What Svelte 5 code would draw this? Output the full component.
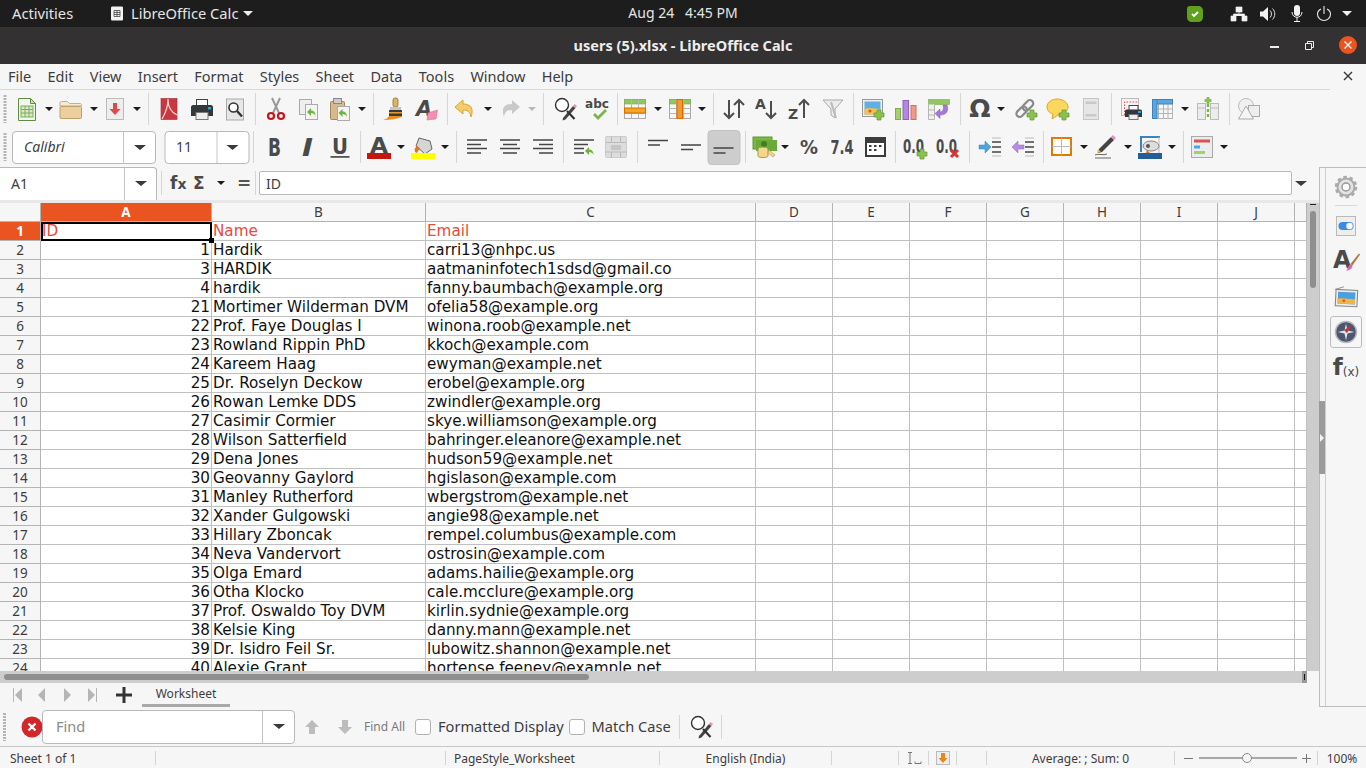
<script>
// green plus badge, used by several toolbar icons
const plus = (x, y) => `<path d="M${x - 2} ${y - 5}h4v3h3v4h-3v3h-4v-3h-3v-4h3z" fill="#8cc152" stroke="#5e9a2e" stroke-width=".7"/>`;
const back = (x, y, c = '#6cb33f') => `<path d="M${x} ${y}l4-4v2.5c3 0 4.5 2 4.5 5.5-1-2.200-2.500-3-4.500-3V${y + 4}z" fill="${c}"/>`;
const table = '<rect x="1.500" y="2.500" width="21" height="19" fill="#f6f6f6" stroke="#aaa"/><rect x="1.500" y="2.500" width="21" height="4.500" fill="#8fc85d" stroke="#7bb04c" stroke-width=".6"/><path d="M8.500 2.500v19M15.500 2.500v19M1.500 11.500h21M1.500 16.500h21" stroke="#b5b5b5" fill="none"/>';
const bold = 'font-family="DejaVu Sans" font-weight="bold" fill="#4a4a4a"';
const squeeze = (w) => `textLength="${w}" lengthAdjust="spacingAndGlyphs"`;
const lines = (list) => `<path d="${list}" stroke="#444" stroke-width="1.600" fill="none"/>`;
const bar = (c) => `<rect x="0" y="18" width="24" height="6" fill="${c}"/>`;

const icons = {
  new: '<path d="M3.500 1.500h12l5 5v17h-17z" fill="#f3f6ee" stroke="#5d8e43"/><path d="M15.500 1.500v5h5z" fill="#cfe0bd" stroke="#5d8e43"/><rect x="6" y="9" width="12" height="11" fill="#d9e8c6" stroke="#7fae5c"/><path d="M10 9v11M14 9v11M6 12.500h12M6 16h12" stroke="#7fae5c" fill="none"/>',
  folder: '<path d="M1 6c0-1 .5-1.500 1.500-1.500h6l2 2H21c1 0 1.500.5 1.500 1.500v1H1z" fill="#f4ead8" stroke="#c9ae85"/><rect x="1" y="9.500" width="21.500" height="12" rx="1" fill="#eccf9f" stroke="#c19f68"/>',
  save: '<rect x="3.500" y="1.500" width="17" height="21" fill="#eee" stroke="#bbb"/><path d="M10 6h4v6h3.500L12 18l-5.500-6H10z" fill="#e2474a"/>',
  pdf: '<rect x="4" y="1.500" width="16" height="21" fill="#c8393f" stroke="#a52a30" stroke-width=".6"/><path d="M5 22c3-5 6-13 6-20M11 3c0 7 3 12 9 15" stroke="#f6d7d7" fill="none" stroke-width="1.300"/>',
  print: '<rect x="6.500" y="2.500" width="11" height="6" fill="#fff" stroke="#444"/><path d="M3 8h18c1 0 2 1 2 2v9H1v-9c0-1 1-2 2-2z" fill="#33383c"/><rect x="6" y="15.500" width="12" height="7" fill="#eee" stroke="#777"/><rect x="18" y="10" width="3" height="2.500" fill="#2aa5dc"/>',
  preview: '<rect x="3.500" y="2" width="17" height="21" fill="#e7e7e7" stroke="#aaa"/><circle cx="10.500" cy="10.500" r="4.500" fill="#fff" stroke="#333" stroke-width="1.600"/><path d="M14 14l5 5.500" stroke="#333" stroke-width="2.400"/>',
  cut: '<path d="M8 1l7 15M16 1L9 16" stroke="#999" stroke-width="2" fill="none"/><circle cx="7" cy="19" r="3" fill="none" stroke="#c4161c" stroke-width="2.200"/><circle cx="17" cy="19" r="3" fill="none" stroke="#c4161c" stroke-width="2.200"/>',
  copy: '<rect x="2.500" y="2.500" width="12" height="15" fill="#eee" stroke="#aaa"/><rect x="8.500" y="7.500" width="12" height="15" fill="#f4f4f4" stroke="#aaa"/>' + back(10, 15),
  paste: '<rect x="2.500" y="4.500" width="14" height="18" rx="1" fill="#d8ba8a" stroke="#a2875c"/><rect x="5.500" y="1.500" width="8" height="5" fill="#ccc" stroke="#888"/><rect x="9.500" y="9.500" width="12" height="14" fill="#f4f4f4" stroke="#aaa"/>' + back(10.500, 16),
  brush: '<rect x="11" y="1" width="5" height="9" rx="2" fill="#d9b26c" stroke="#a9843f"/><rect x="8" y="10" width="11" height="3" fill="#c6c6c6"/><rect x="7" y="13" width="13" height="6" fill="#3a3a3a"/><rect x="7" y="15" width="13" height="1.500" fill="#e59a2a"/><path d="M1 23c3-1 5-2 6-4h13v1c-5 2-11 3-19 3z" fill="#f08c1e"/>',
  clear: `<text x="1" y="19" font-size="21" font-style="italic" ${bold}>A</text><path d="M13 16l9.500-3-1.500 9-9 1z" fill="#f48fb1" stroke="#d9709a" stroke-width=".6"/>`,
  undo: '<path d="M10 3L2 10l8 7v-4c4 0 7 1 8 7 3-8 0-13-8-13z" fill="#f6cd6b" stroke="#d8a33a"/>',
  redo: '<path d="M13 3l8 7-8 7v-4c-4 0-7 1-8 7-3-8 0-13 8-13z" fill="#c9c9c9"/>',
  find: '<path d="M10 21L20 9l2.500 2L12.500 22.500l-3 1z" fill="#444"/><path d="M20 9l1.500-2 2.500 2-1.500 2z" fill="#e88fc7"/><path d="M14 14l7.500 8" stroke="#333" stroke-width="2.200"/><circle cx="9" cy="8" r="6.500" fill="#fff" stroke="#333" stroke-width="1.400"/>',
  spell: `<text x="0" y="11" font-size="13" ${bold} ${squeeze(24)}>abc</text><path d="M9 17l4 4 8-8" stroke="#7ab648" stroke-width="2.800" fill="none"/>`,
  rowins: table + '<rect x="1.500" y="11" width="21" height="5" fill="#f5a623" stroke="#d96a00"/>',
  colins: table + '<rect x="9" y="2.500" width="5.500" height="19" fill="#f29a2e" stroke="#d96a00"/>',
  sortall: '<path d="M7 3v18M2 16l5 5 5-5M17 21V3M12 8l5-5 5 5" stroke="#4d4d4d" stroke-width="2" fill="none"/>',
  sortasc: `<text x="0" y="12" font-size="14" ${bold}>A</text><path d="M16 4v17M11 16l5 5 5-5" stroke="#4d4d4d" stroke-width="2" fill="none"/>`,
  sortdesc: `<text x="0" y="22" font-size="14" ${bold}>Z</text><path d="M16 21V3M11 8l5-5 5 5" stroke="#4d4d4d" stroke-width="2" fill="none"/>`,
  filter: '<path d="M2 3h20l-8 9v9l-4-3v-6z" fill="#ececec" stroke="#aaa"/><path d="M10 5l5 16" stroke="#bbb" stroke-width="2"/>',
  image: '<rect x="1.500" y="2.500" width="20" height="17" fill="#eee" stroke="#999"/><rect x="3.500" y="4.500" width="16" height="13" fill="#5fb0e5"/><path d="M3.500 12c5-2 10 0 16 0v5.500h-16z" fill="#f2c14e"/><circle cx="9" cy="14" r="1.500" fill="#d9542b"/>' + plus(18, 18),
  chart: '<rect x="1.500" y="11.500" width="5" height="11" fill="#a4d16a" stroke="#7fae4a"/><rect x="9" y="3.500" width="5.500" height="19" fill="#b388e0" stroke="#8d63bd"/><rect x="17" y="8.500" width="5" height="14" fill="#ef9a8a" stroke="#cc7060"/>',
  pivot: '<rect x="1.500" y="2.500" width="21" height="5" fill="#8fc85d" stroke="#7bb04c" stroke-width=".6"/><path d="M1.500 7.500v15h6v-15M1.500 13h6M1.500 18h6" fill="#efefef" stroke="#b5b5b5"/><path d="M20 8c2 5 0 10-7 10v3.500L8 16.500l5-4.500V15c3 0 4-3 3-7z" fill="#a679d8" stroke="#8558b8" stroke-width=".5"/>',
  omega: `<text x="12" y="20" text-anchor="middle" font-size="25" ${bold}>Ω</text>`,
  link: '<g transform="rotate(-45 11 11)" fill="none" stroke="#8a8a8a" stroke-width="2.200"><rect x="0" y="8" width="12" height="6.500" rx="3.200"/><rect x="9" y="8" width="12" height="6.500" rx="3.200"/></g>' + plus(18, 18),
  comment: '<path d="M11 2c6 0 11 3.500 11 8s-5 8-10 8l-6 4 1-5c-4-1-6-4-6-7 0-5 5-8 10-8z" fill="#fbd75b" stroke="#dca82c"/>' + plus(18, 18),
  headers: '<rect x="4.500" y="1.500" width="15" height="21" fill="#e6e6e6" stroke="#c6c6c6"/><rect x="6.500" y="4.500" width="11" height="2.500" fill="#c9c9c9"/><rect x="6.500" y="17" width="11" height="2.500" fill="#c9c9c9"/>',
  printarea: '<rect x="1.500" y="1.500" width="17" height="17" fill="#f4f4f4" stroke="#bbb"/><path d="M4.500 18V5h13" fill="none" stroke="#d9534f" stroke-dasharray="1.500 1.500"/><rect x="9" y="8.500" width="9" height="5" fill="#fff" stroke="#444"/><path d="M7 12.500h13c1 0 2 .5 2 1.500v6H5v-6c0-1 1-1.500 2-1.500z" fill="#33383c"/><rect x="9" y="17.500" width="9" height="5" fill="#eee" stroke="#777"/><rect x="18" y="14" width="3" height="2" fill="#2aa5dc"/>',
  freeze: '<rect x="1.500" y="2.500" width="20" height="19" fill="#f6f6f6" stroke="#b5b5b5"/><path d="M7.500 7v15M12.500 7v15M17 7v15M6 12h16M6 16.500h16" stroke="#b5b5b5"/><rect x="1.500" y="2.500" width="20" height="4.500" fill="#5aa7e0" stroke="#3b83bd"/><rect x="1.500" y="2.500" width="4.500" height="19" fill="#5aa7e0" stroke="#3b83bd"/>',
  split: '<rect x="1.500" y="6.500" width="8" height="16" fill="#ececec" stroke="#bbb"/><rect x="14.500" y="6.500" width="8" height="16" fill="#ececec" stroke="#bbb"/><path d="M1.500 11h8M14.500 11h8" stroke="#bbb"/><path d="M12 7v15" stroke="#7ab648" stroke-width="2.400" stroke-dasharray="3 2"/><path d="M10.500 0h3v2h2v3h-2v2h-3V5h-2V2h2z" fill="#8cc152"/>',
  shapes: '<circle cx="9" cy="9" r="7.500" fill="#f0f0f0" stroke="#bbb"/><rect x="11.500" y="8.500" width="11" height="11" fill="#eee" stroke="#aaa"/><path d="M9 9l7.500 13h-15z" fill="#f6f6f6" stroke="#aaa"/>',

  bold: `<text x="6" y="21" font-size="24" ${bold} ${squeeze(13)}>B</text>`,
  italic: `<text x="7" y="21" font-size="24" font-style="italic" ${bold} ${squeeze(11)}>I</text>`,
  under: `<text x="4" y="19" font-size="22" ${bold} ${squeeze(16)}>U</text><rect x="2.500" y="21" width="19" height="1.800" fill="#555"/>`,
  color: `<text x="3" y="17.500" font-size="22" ${bold} ${squeeze(18)}>A</text>` + bar('#c5170f'),
  bucket: '<path d="M8 3l11 3 2 8-7 5-9-8z" fill="#d5d5d5" stroke="#666"/><path d="M6 11c-2 2-3 3-2 6l2 1 3-5z" fill="#e0781f"/>' + bar('#ffff00'),
  left: lines('M2 5h20M2 9.500h14M2 13.500h20M2 18h14'),
  center: lines('M2 5h20M5 9.500h14M2 13.500h20M5 18h14'),
  right: lines('M2 5h20M8 9.500h14M2 13.500h20M8 18h14'),
  wrap: lines('M2 5h20M2 9.500h14M2 13.500h10M2 18h10') + back(13, 16),
  merge: '<rect x="1.500" y="1.500" width="21" height="21" rx="1" fill="#ddd" stroke="#ccc"/><path d="M1.500 7.500h21M1.500 17h21M7.500 1.500v6M16.500 1.500v6M7.500 17v5.500M16.500 17v5.500" stroke="#bbb"/><rect x="7" y="10" width="10" height="5" fill="#c6c6c6"/>',
  top: lines('M2 5.500h20M2 10h12'),
  middle: lines('M2 10h20M2 14.500h12'),
  bottom: lines('M2 13h20M2 18h12'),
  money: '<rect x="0" y="2" width="19" height="12" fill="#7ab648" stroke="#5f9733"/><rect x="3" y="5" width="21" height="11" fill="#6aaa3a"/><circle cx="11" cy="9" r="3" fill="#3f7f22"/><ellipse cx="10" cy="14" rx="5" ry="2" fill="#f0d98a" stroke="#b4934a"/><path d="M5 14v7c0 2 10 2 10 0v-7" fill="#f0d98a" stroke="#b4934a"/><path d="M16 15l6 5-2 2-5-4z" fill="#f0d98a" stroke="#b4934a" stroke-width=".6"/>',
  percent: `<text x="3" y="19" font-size="20" ${bold} ${squeeze(18)}>%</text>`,
  num: `<text x="0.500" y="19" font-size="20" ${bold} ${squeeze(23)}>7.4</text>`,
  date: '<rect x="3" y="3" width="19" height="18" fill="#fff" stroke="#3c3c3c" stroke-width="2"/><rect x="3" y="3" width="19" height="5" fill="#3c3c3c"/><path d="M6 11h2.500M11 11h2.500M16 11h2.500M6 15h2.500M11 15h2.500" stroke="#3c3c3c" stroke-width="2"/>',
  addec: `<text x="0" y="18" font-size="20" ${bold} ${squeeze(21)}>0.0</text>` + plus(19, 19),
  deldec: `<text x="0" y="18" font-size="20" ${bold} ${squeeze(21)}>0.0</text><path d="M15 15l7 7M22 15l-7 7" stroke="#d9342b" stroke-width="3"/>`,
  indent: '<path d="M14 7h9M14 12h9M14 17h9" stroke="#444" stroke-width="1.600"/><path d="M14 3h9M14 21h9" stroke="#bbb"/><path d="M1 10h6V6l6 6-6 6v-4H1z" fill="#4aa5e0" stroke="#2f85bf" stroke-width=".5"/>',
  outdent: '<path d="M14 7h9M14 12h9M14 17h9" stroke="#444" stroke-width="1.600"/><path d="M14 3h9M14 21h9" stroke="#bbb"/><path d="M13 10H7V6l-6 6 6 6v-4h6z" fill="#b88be0" stroke="#9668c2" stroke-width=".5"/>',
  border: '<rect x="2" y="3" width="19" height="17" fill="#fff" stroke="#e07b00" stroke-width="2"/><path d="M11.500 3v17M2 11.500h19" stroke="#bbb"/>',
  line: '<path d="M5 14L17 2l3 3L8 17l-4 1z" fill="#444"/><path d="M17 2l2-2 3 3-2 2z" fill="#e88fc7"/><path d="M4 14l3 3-4 1z" fill="#e0c040"/><path d="M1 20c4-2 8 1 12-1M1 23h16" stroke="#666" fill="none"/>',
  bordercolor: '<path d="M3 17V2h19" stroke="#3b83bd" stroke-width="2" fill="none"/><path d="M21 2v16" stroke="#bbb"/><ellipse cx="13" cy="11" rx="8" ry="5" fill="#ddd" stroke="#888"/><circle cx="10" cy="11" r="2" fill="#555"/><path d="M9 15l3 3H8z" fill="#e0781f"/>' + bar('#255e96'),
  cond: '<rect x="1.500" y="1.500" width="21" height="21" fill="#ececec" stroke="#aaa"/><rect x="4" y="4.500" width="16" height="3" fill="#d9534f"/><rect x="4" y="10.500" width="6" height="3" fill="#4aa5e0"/><rect x="4" y="16" width="11" height="3" fill="#a4d16a"/>',

  gear: '<circle cx="12" cy="12" r="8.500" fill="#e3e3e3" stroke="#aaa" stroke-width="2"/><circle cx="12" cy="12" r="10" fill="none" stroke="#aaa" stroke-width="2.500" stroke-dasharray="3.500 2.800"/><circle cx="12" cy="12" r="4" fill="#fff" stroke="#999" stroke-width="1.500"/>',
  toggle: '<rect x="2.500" y="2.500" width="19" height="19" fill="#eee" stroke="#b9b9b9"/><rect x="4.500" y="8" width="15" height="8" rx="4" fill="#3d8ae0"/><circle cx="15.500" cy="12" r="3.200" fill="#fff"/>',
  style: `<text x="0" y="18" font-size="23" ${bold} ${squeeze(17)}>A</text><path d="M24 5l1 1-7 10-2-1z" fill="#b5723a"/><path d="M12 21c2 0 6-1 6-5l-2-1c-2 1-2 4-4 6z" fill="#d668b8"/>`,
  gallery: '<path d="M2 5l8-2.500" stroke="#999"/><rect x="2.500" y="5.500" width="20" height="15" fill="#eee" stroke="#888" transform="rotate(3 12 12)"/><rect x="4.500" y="7.500" width="16" height="11" fill="#4ca0e0" transform="rotate(3 12 12)"/><path d="M4.500 14c4-1.500 11 0 16-.5v5h-16z" fill="#f0b44a" transform="rotate(3 12 12)"/><circle cx="10" cy="15.500" r="1.200" fill="#d9542b"/>',
  compass: '<circle cx="12" cy="12" r="10.500" fill="#4b5770" stroke="#b9b9b9" stroke-width="1.500"/><path d="M12 3.500l1.500 7 7 1.500-7 1.500-1.500 7-1.500-7-7-1.500 7-1.500z" fill="#dfe3e8"/><path d="M18 5l-5 8-3-3z" fill="#c8352b"/>'
};

// [icon, centre x] as read off the toolbars; each slot is as wide as the step to the next centre
const layout = (list) => list.map(([name, c], i) => ({
  name,
  w: i < list.length - 1 ? list[i + 1][1] - c : 0
}));

const row1 = layout([['grip', 4.5], ['new', 27], ['v', 49], ['folder', 71], ['v', 94], ['save', 115], ['v', 137], ['|', 148], ['pdf', 169], ['print', 202], ['preview', 235], ['|', 255], ['cut', 276], ['copy', 309], ['paste', 340], ['v', 362], ['|', 373], ['brush', 394], ['clear', 427], ['|', 447], ['undo', 465], ['v', 488], ['redo', 511], ['vg', 532], ['|', 543], ['find', 565], ['spell', 597], ['|', 617], ['rowins', 635], ['v', 658], ['colins', 680], ['v', 702], ['|', 713], ['sortall', 734], ['sortasc', 767], ['sortdesc', 800], ['filter', 833], ['|', 853], ['image', 873], ['chart', 906], ['pivot', 939], ['|', 960], ['omega', 980], ['v', 1001], ['link', 1026], ['comment', 1058], ['headers', 1091], ['|', 1111], ['printarea', 1132], ['freeze', 1163], ['v', 1185], ['split', 1208], ['|', 1229], ['shapes', 1249]]);
const row2 = layout([['grip', 4.5], ['font', 84], ['size', 206.5], ['|', 253], ['bold', 274], ['italic', 307], ['under', 340], ['|', 360], ['color', 379], ['v', 401], ['bucket', 423], ['v', 445], ['|', 456], ['left', 477], ['center', 510], ['right', 543], ['|', 563], ['wrap', 584], ['merge', 616], ['|', 637], ['top', 658], ['middle', 691], ['bottom', 723.5], ['|', 745], ['money', 765], ['v', 785], ['percent', 809], ['num', 842], ['date', 875], ['|', 895], ['addec', 915], ['deldec', 948], ['|', 969], ['indent', 990], ['outdent', 1023], ['|', 1043], ['border', 1062], ['v', 1084], ['line', 1106], ['v', 1128], ['bordercolor', 1150], ['v', 1172], ['|', 1183], ['cond', 1202], ['v', 1224]]);

const menus = ['File', 'Edit', 'View', 'Insert', 'Format', 'Styles', 'Sheet', 'Data', 'Tools', 'Window', 'Help'];
const cols = ['A', 'B', 'C', 'D', 'E', 'F', 'G', 'H', 'I', 'J', ''];
const users = [
  [1, 'Hardik', 'carri13@nhpc.us'],
  [3, 'HARDIK', 'aatmaninfotech1sdsd@gmail.co'],
  [4, 'hardik', 'fanny.baumbach@example.org'],
  [21, 'Mortimer Wilderman DVM', 'ofelia58@example.org'],
  [22, 'Prof. Faye Douglas I', 'winona.roob@example.net'],
  [23, 'Rowland Rippin PhD', 'kkoch@example.com'],
  [24, 'Kareem Haag', 'ewyman@example.net'],
  [25, 'Dr. Roselyn Deckow', 'erobel@example.org'],
  [26, 'Rowan Lemke DDS', 'zwindler@example.org'],
  [27, 'Casimir Cormier', 'skye.williamson@example.org'],
  [28, 'Wilson Satterfield', 'bahringer.eleanore@example.net'],
  [29, 'Dena Jones', 'hudson59@example.net'],
  [30, 'Geovanny Gaylord', 'hgislason@example.com'],
  [31, 'Manley Rutherford', 'wbergstrom@example.net'],
  [32, 'Xander Gulgowski', 'angie98@example.net'],
  [33, 'Hillary Zboncak', 'rempel.columbus@example.com'],
  [34, 'Neva Vandervort', 'ostrosin@example.com'],
  [35, 'Olga Emard', 'adams.hailie@example.org'],
  [36, 'Otha Klocko', 'cale.mcclure@example.org'],
  [37, 'Prof. Oswaldo Toy DVM', 'kirlin.sydnie@example.org'],
  [38, 'Kelsie King', 'danny.mann@example.net'],
  [39, 'Dr. Isidro Feil Sr.', 'lubowitz.shannon@example.net'],
  [40, 'Alexie Grant', 'hortense.feeney@example.net']
];
const blanks = Array(8);
</script>

{#snippet icon(name, size = 24)}
  <svg width={size} height={size} viewBox="0 0 24 24">{@html icons[name]}</svg>
{/snippet}

{#snippet toolrow(items)}
  {#each items as it}
    <div class="slot" style="width:{it.w}px">
      <div class="inner">
        {#if it.name === 'grip'}
          <span class="grip"></span>
        {:else if it.name === '|'}
          <span class="sep"></span>
        {:else if it.name === 'v'}
          <span class="tri"></span>
        {:else if it.name === 'vg'}
          <span class="tri off"></span>
        {:else if it.name === 'font'}
          <div class="combo font-combo"><span class="val italic">Calibri</span><span class="drop"><span class="tri big"></span></span></div>
        {:else if it.name === 'size'}
          <div class="combo size-combo"><span class="val">11</span><span class="drop"><span class="tri big"></span></span></div>
        {:else if it.name === 'bottom'}
          <span class="active">{@render icon(it.name)}</span>
        {:else}
          {@render icon(it.name)}
        {/if}
      </div>
    </div>
  {/each}
{/snippet}

<div class="screen">
  <header class="topbar">
    <div class="top-left">
      <span class="activities">Activities</span>
      <span class="appmenu">
        <svg width="12" height="15" viewBox="0 0 12 15"><path d="M0 2C0 1 .5.500 1.500.500h9c1 0 1.500.5 1.500 1.500v11c0 1-.5 1.500-1.500 1.500h-9C.5 14.500 0 14 0 13z" fill="#f2f2f2"/><path d="M3 4.500h6v6H3zM3 6.500h6M3 8.500h6M6 4.500v6" fill="none" stroke="#444" stroke-width=".8"/></svg>
        LibreOffice Calc
        <span class="tri white"></span>
      </span>
    </div>
    <div class="clock">Aug 24&nbsp;&nbsp;&nbsp;4:45 PM</div>
    <div class="tray">
      <svg width="16" height="16" viewBox="0 0 16 16"><path d="M3 0h8c3 0 5 2 5 5v6c0 3-2 5-5 5H5c-3 0-5-2-5-5V3c0-2 1-3 3-3z" fill="#5fa11c"/><path d="M5 8l2 2 4-4" stroke="#fff" stroke-width="1.800" fill="none"/></svg>
      <svg class="t1" width="16" height="14" viewBox="0 0 16 14"><path d="M5 0h6v5H5zM0 9h5v5H0zM11 9h5v5h-5zM8 5v2M2.500 9V7h11v2" fill="#f2f2f2" stroke="#f2f2f2" stroke-width=".7"/></svg>
      <svg class="t2" width="16" height="14" viewBox="0 0 16 14"><path d="M0 4.500h3L8 0v14L3 9.500H0z" fill="#f2f2f2"/><path d="M10 3.500c2 2 2 5 0 7M12.500 1.500c3 3 3 8 0 11" stroke="#ddd" fill="none"/></svg>
      <svg class="t3" width="12" height="17" viewBox="0 0 12 17"><rect x="3" y="0" width="6" height="11" rx="3" fill="#f2f2f2"/><path d="M1 7c0 7 10 7 10 0M6 12v4M3 16.500h6" stroke="#f2f2f2" fill="none"/></svg>
      <svg class="t4" width="14" height="15" viewBox="0 0 14 15"><path d="M4 3C1 4.500.5 7 .5 8a6.500 6.500 0 0 0 13 0c0-1-.5-3.500-3.500-5M7 0v8" stroke="#e6e6e6" fill="none" stroke-width="1.100"/></svg>
      <span class="tri white t5"></span>
    </div>
  </header>

  <div class="titlebar">
    <span class="title">users (5).xlsx - LibreOffice Calc</span>
    <div class="winctl">
      <span class="min"></span>
      <svg class="rest" width="9" height="9" viewBox="0 0 9 9"><path d="M2.500 2V.5h6v6H7M.5 2.500h6v6h-6z" fill="none" stroke="#eee"/></svg>
      <svg class="close" width="18" height="18" viewBox="0 0 18 18"><circle cx="9" cy="9" r="9" fill="#e95420"/><path d="M5.500 5.500l7 7M12.500 5.500l-7 7" stroke="#fff" stroke-width="1.300"/></svg>
    </div>
  </div>

  <nav class="menubar">
    {#each menus as m}<span class="menu">{m}</span>{/each}
    <svg class="doc-close" width="10" height="10" viewBox="0 0 10 10"><path d="M1 1l8 8M9 1l-8 8" stroke="#333" stroke-width="1.300"/></svg>
  </nav>

  <div class="toolbar first">{@render toolrow(row1)}</div>
  <div class="toolbar second">{@render toolrow(row2)}</div>

  <div class="middle">
    <div class="work">
      <div class="formula">
        <div class="combo name-box"><span class="val">A1</span><span class="drop"><span class="tri big"></span></span></div>
        <span class="sep short first-sep"></span>
        <span class="fx">f<sub>x</sub></span>
        <span class="sigma">Σ</span>
        <span class="tri sigma-tri"></span>
        <span class="eq">=</span>
        <span class="sep short"></span>
        <div class="input">ID</div>
        <span class="tri big expand"></span>
      </div>

      <div class="sheet-row">
        <div class="sheet">
          <div class="corner"></div>
          {#each cols as c, i}<div class="col-head" class:on={i === 0}>{c}</div>{/each}

          <div class="row-head on">1</div>
          <div class="cell title-cell sel">ID</div>
          <div class="cell title-cell">Name</div>
          <div class="cell title-cell">Email</div>
          {#each blanks as _}<div class="cell"></div>{/each}

          {#each users as u, i}
            <div class="row-head">{i + 2}</div>
            <div class="cell num">{u[0]}</div>
            <div class="cell">{u[1]}</div>
            <div class="cell">{u[2]}</div>
            {#each blanks as _}<div class="cell"></div>{/each}
          {/each}
        </div>
        <div class="vscroll"><span class="split-mark"></span><span class="vthumb"></span></div>
      </div>

      <div class="hscroll"><span class="hthumb"></span><span class="hmark"></span></div>

      <div class="tabbar">
        <svg class="nav" width="90" height="16" viewBox="0 0 90 16" fill="#b5b5b5"><path d="M3 1h1v14H3zM12 1v14L5 8zM35 1v14L28 8zM54 1v14l7-7zM78 1v14l7-7zM86 1h1v14h-1z"/></svg>
        <svg class="add" width="18" height="18" viewBox="0 0 18 18"><path d="M9 1v16M1 9h16" stroke="#333" stroke-width="3"/></svg>
        <span class="tab">Worksheet</span>
      </div>
    </div>

    <aside class="sidebar">
      <div class="handle"><span class="grab"><span class="grab-tri"></span></span></div>
      <div class="deck">
        <div class="deck-btn gear">{@render icon('gear')}</div>
        <span class="deck-sep"></span>
        <div class="deck-btn">{@render icon('toggle')}</div>
        <div class="deck-btn">{@render icon('style', 26)}</div>
        <div class="deck-btn">{@render icon('gallery', 26)}</div>
        <div class="deck-btn cur">{@render icon('compass')}</div>
        <div class="deck-btn fnx">f<sub>(x)</sub></div>
      </div>
    </aside>
  </div>

  <div class="findbar">
    <span class="grip"></span>
    <svg class="find-x" width="22" height="22" viewBox="0 0 22 22"><circle cx="11" cy="11" r="10.500" fill="#d3262b"/><path d="M7.500 7.500l7 7M14.500 7.500l-7 7" stroke="#fff" stroke-width="2.400"/></svg>
    <div class="combo find-combo"><span class="val muted">Find</span><span class="drop"><span class="tri big"></span></span></div>
    <svg class="f-up" width="16" height="16" viewBox="0 0 16 16"><path d="M8 1l7 7h-4v7H5V8H1z" fill="#bcbcbc"/></svg>
    <svg class="f-down" width="16" height="16" viewBox="0 0 16 16"><path d="M8 15l7-7h-4V1H5v7H1z" fill="#bcbcbc"/></svg>
    <span class="find-all">Find All</span>
    <span class="check"></span>
    <span class="lbl">Formatted Display</span>
    <span class="check second-check"></span>
    <span class="lbl">Match Case</span>
    <span class="sep short find-sep"></span>
    <span class="find-icon">{@render icon('find')}</span>
    <span class="sep short find-sep2"></span>
  </div>

  <footer class="status">
    <div class="st s1">Sheet 1 of 1</div>
    <div class="st s2"></div>
    <div class="st s3">PageStyle_Worksheet</div>
    <div class="st s4">English (India)</div>
    <div class="st s5"></div>
    <div class="st s6">
      <svg width="16" height="12" viewBox="0 0 16 12"><path d="M2 .5h4M2 11.500h4M4 .5v11M9 11.500h6M9 9.500v2M15 9.500v2" stroke="#777" fill="none"/></svg>
    </div>
    <div class="st s7">
      <svg width="14" height="14" viewBox="0 0 14 14"><rect x=".5" y=".5" width="13" height="13" fill="#eee" stroke="#bbb"/><path d="M5 2h4v5h2.500L7 12 2.500 7H5z" fill="#e9861c"/></svg>
    </div>
    <div class="st s8"></div>
    <div class="st s9">Average: ; Sum: 0</div>
    <div class="st s10">
      <span class="z-minus"></span>
      <span class="z-track"><span class="z-thumb"></span></span>
      <span class="z-plus"></span>
    </div>
    <div class="st s11">100%</div>
  </footer>
</div>

<style>
:global(body) {
  margin: 0;
  background: #f6f6f6;
}

* {
  box-sizing: border-box;
}

.screen {
  width: 1366px;
  height: 768px;
  overflow: hidden;
  display: flex;
  flex-direction: column;
  font-family: "Noto Sans", sans-serif;
  font-size: 14px;
  color: #3d3d3d;
  background: #f6f6f6;
}

svg {
  display: block;
  flex-shrink: 0;
  overflow: visible;
}

sub {
  vertical-align: baseline;
}

/* little dropdown triangle */
.tri {
  display: block;
  width: 0;
  height: 0;
  border-left: 4px solid transparent;
  border-right: 4px solid transparent;
  border-top: 4px solid #1c1c1c;
}

.tri.off {
  border-top-color: #b9b9b9;
}

.tri.big {
  border-left-width: 6px;
  border-right-width: 6px;
  border-top-width: 5px;
  border-top-color: #3a3a3a;
}

.tri.white {
  border-left-width: 5px;
  border-right-width: 5px;
  border-top-width: 5px;
  border-top-color: #eee;
}

/* gnome top bar */
.topbar {
  height: 27px;
  background: #1d1d1d;
  color: #e4e4e4;
  display: grid;
  grid-template-columns: 1fr auto 1fr;
  align-items: center;
  flex-shrink: 0;
}

.top-left {
  display: flex;
  align-items: center;
  padding-left: 12px;
  font-size: 14.700px;
  line-height: 25px;
}

.activities {
  width: 88px;
}

.appmenu {
  display: flex;
  align-items: center;
  gap: 8px;
  margin-left: 11px;
}

.appmenu .tri {
  margin-left: -3px;
}

.clock {
  font-size: 14px;
  line-height: 25px;
  height: 27px;
}

.tray {
  display: flex;
  align-items: center;
  padding-left: 454px;
  margin-left: -5px;
}

.t1 { margin-left: 28px; }
.t2 { margin-left: 13px; }
.t3 { margin-left: 15px; }
.t4 { margin-left: 14px; }
.t5 { margin-left: 11px; }

.titlebar {
  height: 37px;
  padding-bottom: 2px;
  background: #333132;
  color: #ededed;
  position: relative;
  display: flex;
  align-items: center;
  justify-content: center;
  flex-shrink: 0;
}

.title {
  font-weight: 700;
  font-size: 14.500px;
}

.winctl {
  position: absolute;
  right: 9px;
  top: 9px;
  display: flex;
  align-items: center;
}

.min {
  width: 9px;
  height: 2px;
  background: #eee;
  margin-top: 3px;
}

.rest {
  margin-left: 26px;
}

.close {
  margin-left: 25px;
}

.menubar {
  height: 25px;
  padding-left: 8px;
  padding-bottom: 2px;
  display: flex;
  align-items: center;
  position: relative;
  flex-shrink: 0;
  font-size: 14.500px;
}

.menu {
  margin-right: 16.300px;
}

.doc-close {
  position: absolute;
  right: 13px;
  top: 7px;
}

.toolbar {
  display: flex;
  align-items: center;
  flex-shrink: 0;
  padding-left: 4.500px;
}

.toolbar.first {
  height: 38px;
  width: 1330px;
  border-top: 1px solid #d9d9d9;
}

.toolbar.second {
  height: 40px;
}

/* a slot starts on the centre of its tool and runs to the next one */
.slot {
  flex-shrink: 0;
  height: 100%;
  display: flex;
  align-items: center;
}

.inner {
  flex-shrink: 0;
  display: flex;
  align-items: center;
  transform: translateX(-50%);
}

.grip {
  display: block;
  width: 3px;
  height: 28px;
  background-image: linear-gradient(#b5b5b5 2px, transparent 2px);
  background-size: 3px 3px;
}

.sep {
  display: block;
  width: 1px;
  height: 32px;
  background: #d6d6d6;
  flex-shrink: 0;
}

.inner .sep {
  margin-left: 1px;
}

.sep.short {
  height: 24px;
}

.active {
  display: flex;
  align-items: center;
  justify-content: center;
  width: 33px;
  height: 35px;
  background: #cdcdcd;
  border: 1px solid #c2c2c2;
  border-radius: 4px;
}

.combo {
  display: flex;
  height: 33px;
  background: #fff;
  border: 1px solid #b9b9b9;
  border-radius: 4px;
  flex-shrink: 0;
}

.combo .val {
  flex: 1;
  display: flex;
  align-items: center;
  padding-left: 11px;
  padding-bottom: 1px;
}

.italic {
  font-style: italic;
}

.muted {
  color: #8a8a8a;
}

.drop {
  width: 32px;
  border-left: 1px solid #c6c6c6;
  display: flex;
  align-items: center;
  justify-content: center;
}

.font-combo {
  width: 144px;
}

.size-combo {
  width: 85px;
}

.middle {
  display: flex;
  height: 540px;
  flex-shrink: 0;
}

.work {
  width: 1319px;
  display: flex;
  flex-direction: column;
}

.formula {
  height: 33px;
  display: flex;
  align-items: center;
  border-bottom: 1px solid #f6f6f6;
}

.name-box {
  width: 157px;
  height: 33px;
  border-radius: 0 4px 0 0;
  border-left: 0;
  border-bottom: 0;
}

.first-sep {
  margin-left: 4px;
}

.fx {
  margin-left: 8px;
  font-family: "DejaVu Sans", sans-serif;
  font-weight: 700;
  font-size: 17px;
  color: #4a4a4a;
  width: 23px;
}

.fx sub {
  font-size: 14px;
}

.sigma {
  font-family: "DejaVu Sans", sans-serif;
  font-weight: 700;
  font-size: 17px;
  color: #4a4a4a;
  width: 14px;
}

.sigma-tri {
  margin-left: 10px;
}

.eq {
  font-family: "DejaVu Sans", sans-serif;
  font-weight: 700;
  font-size: 17px;
  color: #555;
  margin-left: 12px;
  width: 18px;
}

.input {
  width: 1033px;
  height: 24px;
  margin-left: 3px;
  background: #fff;
  border: 1px solid #b9b9b9;
  display: flex;
  align-items: center;
  padding-left: 6px;
  border-radius: 2px;
}

.expand {
  margin-left: 3px;
}

.sheet-row {
  height: 471px;
  display: flex;
  border-top: 3px solid #e8e8e8;
}

.sheet {
  width: 1307px;
  overflow: hidden;
  display: grid;
  grid-template-columns: 41px 171px 214px 330px repeat(7, 77px) 12px;
  grid-auto-rows: 19px;
  background: #fff;
  font-family: "DejaVu Sans", sans-serif;
  font-size: 15.200px;
  color: #111;
}

.corner,
.col-head,
.row-head {
  background: #f6f6f6;
  border-right: 1px solid #b4b4b4;
  border-bottom: 1px solid #b4b4b4;
  font-family: "Noto Sans", sans-serif;
  font-size: 13.500px;
  color: #3d3d3d;
  display: flex;
  align-items: center;
  justify-content: center;
}

.on {
  background: #e95420;
  color: #fff;
  font-weight: 700;
}

.cell {
  border-right: 1px solid #c0c0c0;
  border-bottom: 1px solid #c0c0c0;
  padding: 0 1px;
  line-height: 18px;
  white-space: nowrap;
  overflow: hidden;
}

.num {
  text-align: right;
}

.title-cell {
  color: #e64a3c;
}

.sel {
  position: relative;
  overflow: visible;
  outline: 2px solid #000;
  outline-offset: -2px;
  background: #fff;
}

.sel::after {
  content: "";
  position: absolute;
  right: -3px;
  bottom: -3px;
  width: 5px;
  height: 5px;
  background: #000;
}

.vscroll {
  width: 12px;
  background: #cdcdcd;
  display: flex;
  flex-direction: column;
  align-items: center;
}

.split-mark {
  width: 6px;
  height: 1px;
  background: #222;
  margin-top: 1px;
}

.vthumb {
  width: 6px;
  height: 77px;
  margin-top: 6px;
  border-radius: 3px;
  background: #8f8f8f;
}

.hscroll {
  height: 12px;
  background: #cdcdcd;
  display: flex;
  align-items: center;
  position: relative;
  flex-shrink: 0;
  margin-right: 12px;
}

.hthumb {
  width: 585px;
  height: 6px;
  margin-left: 4px;
  border-radius: 3px;
  background: #8f8f8f;
}

.hmark {
  position: absolute;
  right: 0;
  top: 0;
  width: 5px;
  height: 12px;
  background: #9a9a9a;
  display: flex;
  align-items: center;
  justify-content: center;
}

.hmark::after {
  content: "";
  width: 1px;
  height: 6px;
  background: #111;
}

.tabbar {
  flex: 1;
  display: flex;
  align-items: center;
  padding-left: 10px;
}

.add {
  margin-left: 15px;
}

.tab {
  margin-left: 9px;
  width: 88px;
  height: 24px;
  border-bottom: 3px solid #a9a9a9;
  display: flex;
  align-items: center;
  justify-content: center;
  font-size: 12px;
}

.sidebar {
  width: 47px;
  height: 540px;
  display: flex;
  border-top: 1px solid #bdbdbd;
  border-bottom: 1px solid #bdbdbd;
  border-left: 1px solid #bdbdbd;
}

.handle {
  width: 6px;
  border-right: 1px solid #cfcfcf;
  position: relative;
}

.grab {
  position: absolute;
  left: -1px;
  top: 233px;
  width: 6px;
  height: 73px;
  background: #9b9b9b;
  display: flex;
  align-items: center;
  justify-content: center;
}

.grab-tri {
  border-left: 4px solid #f4f4f4;
  border-top: 4px solid transparent;
  border-bottom: 4px solid transparent;
}

.deck {
  flex: 1;
  display: flex;
  flex-direction: column;
  align-items: center;
  padding-top: 6px;
}

.deck-btn {
  width: 32px;
  height: 32px;
  display: flex;
  align-items: center;
  justify-content: center;
  margin-bottom: 3.300px;
  flex-shrink: 0;
}

.gear {
  margin-bottom: 0;
  height: 26px;
}

.deck-sep {
  width: 22px;
  height: 1px;
  background: #d9d9d9;
  margin: 5px 0 4px;
}

.cur {
  border: 1px solid #bdbdbd;
  border-radius: 3px;
}

.fnx {
  font-family: "DejaVu Sans", sans-serif;
  font-weight: 700;
  font-size: 23px;
  color: #4a4a4a;
}

.fnx sub {
  font-size: 12px;
  font-weight: 400;
  margin-top: 10px;
}

.findbar {
  height: 40px;
  display: flex;
  align-items: center;
  padding-left: 3px;
  border-bottom: 1px solid #c6c6c6;
  flex-shrink: 0;
  font-size: 14.600px;
}

.find-x {
  margin-left: 15px;
}

.find-combo {
  width: 253px;
  margin-left: -1px;
  height: 34px;
}

.find-combo .val {
  padding-left: 13px;
}

.f-up {
  margin-left: 9px;
}

.f-down {
  margin-left: 17px;
}

.find-all {
  margin-left: 11px;
  font-size: 12px;
  color: #7a7a7a;
  width: 47px;
}

.check {
  width: 16px;
  height: 16px;
  background: #fff;
  border: 1px solid #b2b2b2;
  border-radius: 3px;
  margin-left: 4px;
}

.second-check {
  margin-left: 5px;
}

.lbl {
  margin-left: 7px;
  margin-top: -2px;
}

.find-sep {
  margin-left: 8px;
}

.find-icon {
  margin-left: 9px;
}

.find-sep2 {
  margin-left: 8px;
}

.status {
  flex: 1;
  display: flex;
  align-items: center;
  font-size: 12px;
  padding-top: 1px;
}

.st {
  height: 14px;
  display: flex;
  align-items: center;
  border-left: 1px solid #d4d4d4;
  flex-shrink: 0;
}

.s1 { width: 155px; padding-left: 10px; border-left: 0; }
.s2 { width: 290px; }
.s3 { width: 214px; padding-left: 8px; }
.s4 { width: 172px; justify-content: center; }
.s5 { width: 67px; }
.s6 { width: 30px; justify-content: center; }
.s7 { width: 28px; justify-content: center; }
.s8 { width: 30px; }
.s9 { width: 188px; justify-content: center; }
.s10 { width: 143px; padding-left: 9px; }
.s11 { width: 49px; justify-content: center; }

.z-minus,
.z-plus {
  display: block;
  width: 9px;
  height: 1px;
  background: #777;
}

.z-plus {
  height: 9px;
  background: linear-gradient(#777, #777) center / 1px 9px no-repeat, linear-gradient(#777, #777) center / 9px 1px no-repeat;
}

.z-track {
  position: relative;
  width: 98px;
  height: 2px;
  margin: 0 5px 0 6px;
  background: #a8a8a8;
}

.z-thumb {
  position: absolute;
  left: 43px;
  top: -4px;
  width: 10px;
  height: 10px;
  border-radius: 50%;
  background: #f6f6f6;
  border: 1px solid #8a8a8a;
}
</style>
